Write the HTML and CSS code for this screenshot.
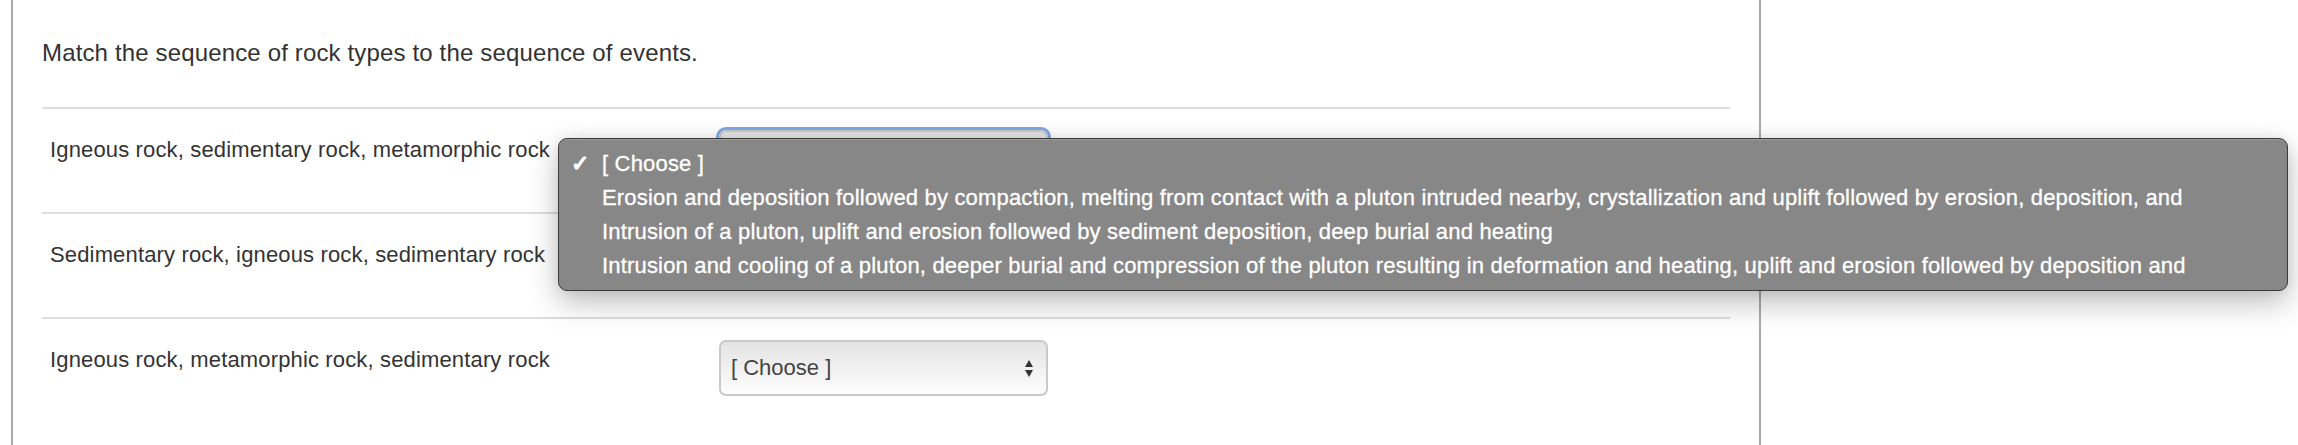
FILE: index.html
```html
<!DOCTYPE html>
<html lang="en">
<head>
    <meta charset="UTF-8">
    <title>Matching question</title>
    <link rel="stylesheet" href="styles.css">
</head>
<body>
    <div class="page">
        <div class="question">
            <p class="question-text">Match the sequence of rock types to the sequence of events.</p>

            <div class="match-row">
                <div class="match-label"><span>Igneous rock, sedimentary rock, metamorphic rock</span></div>
                <div class="select focused">
                    <span>[ Choose ]</span>
                    <span class="arrows"></span>
                </div>
            </div>

            <div class="match-row">
                <div class="match-label"><span>Sedimentary rock, igneous rock, sedimentary rock</span></div>
                <div class="select">
                    <span>[ Choose ]</span>
                    <span class="arrows"></span>
                </div>
            </div>

            <div class="match-row">
                <div class="match-label"><span>Igneous rock, metamorphic rock, sedimentary rock</span></div>
                <div class="select">
                    <span>[ Choose ]</span>
                    <span class="arrows"></span>
                </div>
            </div>
        </div>
        <div class="sidebar"></div>
    </div>

    <!-- open dropdown of the first select -->
    <ul class="dropdown">
        <li class="selected"><span class="check">&#10003;</span>[ Choose ]</li>
        <li>Erosion and deposition followed by compaction, melting from contact with a pluton intruded nearby, crystallization and uplift followed by erosion, deposition, and</li>
        <li>Intrusion of a pluton, uplift and erosion followed by sediment deposition, deep burial and heating</li>
        <li>Intrusion and cooling of a pluton, deeper burial and compression of the pluton resulting in deformation and heating, uplift and erosion followed by deposition and</li>
    </ul>
</body>
</html>
```

FILE: styles.css
```css
* {
    margin: 0;
    padding: 0;
    box-sizing: border-box;
}

body {
    font-family: "Liberation Sans", Arial, sans-serif;
    background-color: #fff;
    color: #333;
    height: 445px;
    overflow: hidden;
}

.page {
    display: flex;
    height: 445px;
}

.question {
    margin-left: 11px;
    width: 1750px;
    border-left: 2px solid #aaa;
    border-right: 2px solid #aaa;
    padding: 37px 29px 0 29px;
}

.question-text {
    font-size: 24px;
    line-height: 32px;
    letter-spacing: 0.15px;
    margin-bottom: 38px;
}

.match-row {
    display: flex;
    border-top: 2px solid #ddd;
    height: 105px;
    padding-top: 21px;
}

.match-label {
    width: 677px;
    padding-left: 8px;
    padding-top: 7px;
    font-size: 22px;
    line-height: 26px;
    letter-spacing: 0.15px;
    color: #333;
}

.select {
    width: 329px;
    height: 56px;
    border: 2px solid #c9c9c9;
    border-radius: 7px;
    background: linear-gradient(#e4e4e4, #f3f3f3 60%, #fdfdfd);
    display: flex;
    align-items: center;
    justify-content: space-between;
    padding: 0 13px 0 10px;
    font-size: 22px;
    color: #444;
}

.select.focused {
    box-shadow: 0 0 0 3px #7ea6e6;
}

.arrows {
    display: flex;
    flex-direction: column;
    gap: 3px;
}

.arrows:before,
.arrows:after {
    content: "";
    width: 0;
    height: 0;
    border-left: 4px solid transparent;
    border-right: 4px solid transparent;
}

.arrows:before {
    border-bottom: 7px solid #333;
}

.arrows:after {
    border-top: 7px solid #333;
}

.dropdown {
    position: absolute;
    left: 558px;
    top: 138px;
    width: 1730px;
    height: 153px;
    list-style: none;
    background-color: #878787;
    border: 1px solid #3a3a3a;
    border-radius: 9px;
    box-shadow: inset 0 1px 0 #9a9a9a, 0 12px 30px rgba(0, 0, 0, 0.25), 0 0 14px rgba(0, 0, 0, 0.08);
    padding: 8px 0;
    overflow: hidden;
}

.dropdown li {
    height: 34px;
    line-height: 34px;
    padding-left: 43px;
    font-size: 22px;
    letter-spacing: 0.18px;
    color: #fff;
    -webkit-text-stroke: 0.3px #fff;
    white-space: nowrap;
    overflow: hidden;
    position: relative;
}

.check {
    position: absolute;
    left: 12px;
    font-size: 22px;
    font-weight: bold;
}
```
